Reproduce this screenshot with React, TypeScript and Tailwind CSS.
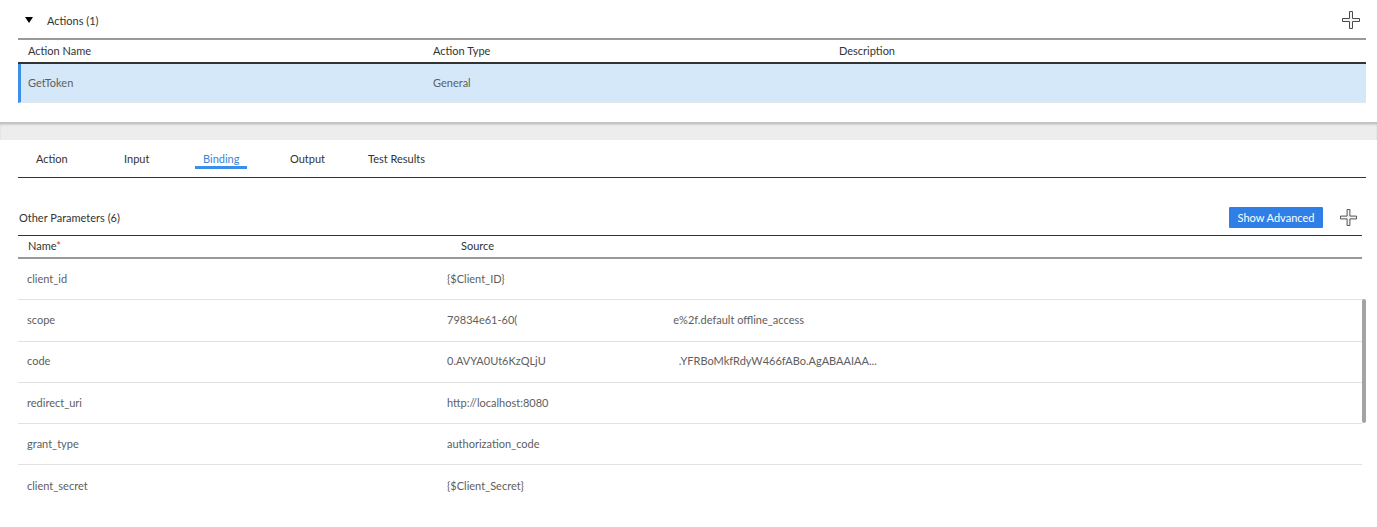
import React from 'react';

const PlusIcon: React.FC<{ size?: number }> = ({ size = 18 }) => (
  <svg width={size} height={size} viewBox="0 0 18 18" fill="none">
    <path
      d="M7.5 0.5 H10.5 V7.5 H17.5 V10.5 H10.5 V17.5 H7.5 V10.5 H0.5 V7.5 H7.5 Z"
      stroke="#4a4a4a"
      strokeWidth="1"
      fill="#f4f4f4"
    />
  </svg>
);

const params = [
  { name: 'client_id', source: <>{'{$Client_ID}'}</> },
  {
    name: 'scope',
    source: (
      <>
        <span>79834e61-60(</span>
        <span className="inline-block w-[156px]" />
        <span>e%2f.default offline_access</span>
      </>
    ),
  },
  {
    name: 'code',
    source: (
      <>
        <span>0.AVYA0Ut6KzQLjU</span>
        <span className="inline-block w-[133px]" />
        <span>.YFRBoMkfRdyW466fABo.AgABAAIAA...</span>
      </>
    ),
  },
  { name: 'redirect_uri', source: <>http://localhost:8080</> },
  { name: 'grant_type', source: <>authorization_code</> },
  { name: 'client_secret', source: <>{'{$Client_Secret}'}</> },
];

const tabs = [
  { label: 'Action', w: 'w-[88px]' },
  { label: 'Input', w: 'w-[79px]' },
  { label: 'Binding', w: 'w-[87px]', active: true },
  { label: 'Output', w: 'w-[78px]' },
  { label: 'Test Results', w: 'w-[100px]' },
];

const App: React.FC = () => {
  return (
    <div className="w-[1377px] h-[527px] overflow-hidden bg-white text-[11px] text-[#5e5e5e] font-['Lato','Liberation_Sans',sans-serif]">
      {/* actions section */}
      <section className="pl-[18px] pr-[11px]">
        <div className="h-[38px] flex items-center justify-between">
          <div className="flex items-center pt-[4px]">
            <span className="ml-[7px] w-0 h-0 border-l-[4px] border-r-[4px] border-t-[6px] border-l-transparent border-r-transparent border-t-black -mt-[3px]" />
            <span className="ml-[14px] text-[#333]">Actions (1)</span>
          </div>
          <div className="mr-[6px] pt-[2px]">
            <PlusIcon />
          </div>
        </div>
        <div className="border-t-2 border-[#9a9a9a]">
          <div className="h-[24px] grid grid-cols-[415px_406px_1fr] items-center border-b-2 border-[#333] text-[#333]">
            <div className="pl-[10px]">Action Name</div>
            <div>Action Type</div>
            <div>Description</div>
          </div>
          <div className="h-[39px] grid grid-cols-[412px_406px_1fr] items-center bg-[#d5e8f9] border-l-[3px] border-[#3b8eea] border-b border-b-[#dfe6ec]">
            <div className="pl-[7px]">GetToken</div>
            <div>General</div>
            <div />
          </div>
        </div>
      </section>

      {/* separator band */}
      <div className="mt-[19px] h-[18px] bg-[#ededed] border-t-2 border-[#c4c4c4] shadow-[inset_0_1px_2px_rgba(0,0,0,0.12)]" />

      {/* tabs */}
      <section className="pl-[18px] pr-[11px]">
        <div className="h-[38px] flex items-end border-b border-[#333]">
          {tabs.map(t => (
            <div key={t.label} className={`${t.w} pl-[10px] h-[38px] flex items-end`}>
              <span
                className={`mb-[8px] px-[8px] pb-[2px] leading-none border-b-[3px] ${
                  t.active ? 'text-[#3a86d8] border-[#3b8eea]' : 'text-[#333] border-transparent'
                }`}
              >
                {t.label}
              </span>
            </div>
          ))}
        </div>
      </section>

      {/* other parameters */}
      <section className="pl-[18px] pr-[15px] relative">
        <div className="h-[57px] flex items-end justify-between pb-[6px]">
          <div className="pl-[1px] pb-[3px] text-[#333]">Other Parameters (6)</div>
          <div className="flex items-center gap-[17px] mr-[5px] mb-[1px]">
            <button className="h-[21px] w-[94px] bg-[#2f7fe6] text-white rounded-[1px] text-[11px] leading-none">
              Show Advanced
            </button>
            <PlusIcon size={17} />
          </div>
        </div>
        <div className="border-t border-[#333]">
          <div className="h-[23px] grid grid-cols-[443px_1fr] items-end pb-[3px] border-b-2 border-[#999] text-[#333]">
            <div className="pl-[10px]">
              Name<span className="text-[#d9302b]">*</span>
            </div>
            <div>Source</div>
          </div>
          {params.map((p, i) => (
            <div
              key={p.name}
              className={`h-[41.3px] grid grid-cols-[429px_1fr] items-center ${
                i < params.length - 1 ? 'border-b border-[#e2e2e2]' : ''
              }`}
            >
              <div className="pl-[9px]">{p.name}</div>
              <div className="whitespace-nowrap">{p.source}</div>
            </div>
          ))}
        </div>
        <div className="absolute right-[11px] top-[121px] w-[4px] h-[124px] rounded-full bg-[#a3a3a3]" />
      </section>
    </div>
  );
};

export default App;
